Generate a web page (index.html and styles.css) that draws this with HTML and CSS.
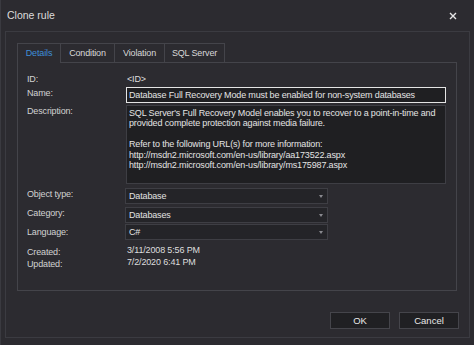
FILE: index.html
```html
<!DOCTYPE html>
<html>
<head>
<meta charset="utf-8">
<link rel="stylesheet" href="styles.css">
</head>
<body>
<div class="dialog">
  <div class="titlebar">
    <span class="title">Clone rule</span>
    <svg class="close" width="8" height="8" viewBox="0 0 8 8"><path d="M1 1L7 7M7 1L1 7" stroke="#e6e6e6" stroke-width="1.4"/></svg>
  </div>
  <div class="outer">
    <div class="tabs">
      <div class="tab active">Details</div>
      <div class="tab">Condition</div>
      <div class="tab">Violation</div>
      <div class="tab">SQL Server</div>
      <div class="tabfill"></div>
    </div>
    <div class="panel">
      <div class="row r-id"><div class="label">ID:</div><div class="value">&lt;ID&gt;</div></div>
      <div class="row r-name"><div class="label">Name:</div><div class="input focus">Database Full Recovery Mode must be enabled for non-system databases</div></div>
      <div class="row r-desc"><div class="label">Description:</div><div class="input area">SQL Server's Full Recovery Model enables you to recover to a point-in-time and
provided complete protection against media failure.

Refer to the following URL(s) for more information:
http://msdn2.microsoft.com/en-us/library/aa173522.aspx
http://msdn2.microsoft.com/en-us/library/ms175987.aspx</div></div>
      <div class="row r-obj"><div class="label">Object type:</div><div class="select"><span>Database</span><i class="arrow"></i></div></div>
      <div class="row r-cat"><div class="label">Category:</div><div class="select"><span>Databases</span><i class="arrow"></i></div></div>
      <div class="row r-lang"><div class="label lang">Language:</div><div class="select"><span>C#</span><i class="arrow"></i></div></div>
      <div class="row r-created"><div class="label">Created:</div><div class="value">3/11/2008 5:56 PM</div></div>
      <div class="row r-updated"><div class="label">Updated:</div><div class="value">7/2/2020 6:41 PM</div></div>
    </div>
    <div class="buttons">
      <div class="btn">OK</div>
      <div class="btn">Cancel</div>
    </div>
  </div>
</div>
</body>
</html>
```
FILE: styles.css
```css
html, body {
  margin: 0;
  padding: 0;
  background: #2c2b30;
}
body {
  width: 474px;
  height: 345px;
  overflow: hidden;
  font-family: "Liberation Sans", Arial, sans-serif;
  font-size: 9px;
  letter-spacing: -0.15px;
  color: #d2d2d2;
}
.dialog {
  width: 474px;
  height: 345px;
  box-sizing: border-box;
  border-left: 1px solid #3a3a40;
}
.titlebar {
  height: 31px;
  display: flex;
  align-items: center;
  justify-content: space-between;
  padding: 0 17px 0 6px;
  box-sizing: border-box;
}
.title {
  font-size: 10.5px;
  letter-spacing: 0;
  color: #dcdcdc;
  margin-top: -1px;
}
.close {
  display: block;
}
.outer {
  margin: 0 4px 0 4px;
  height: 307px;
  box-sizing: border-box;
  border: 1px solid #3b3b41;
  padding: 11px 12px 0 11px;
  display: flex;
  flex-direction: column;
}
.tabs {
  display: flex;
  height: 20px;
}
.tab {
  box-sizing: border-box;
  height: 20px;
  line-height: 19px;
  border-top: 1px solid #44444a;
  border-right: 1px solid #44444a;
  border-bottom: 1px solid #44444a;
  text-align: center;
  color: #d8d8d8;
}
.tab:nth-child(1) { width: 44px; }
.tab:nth-child(2) { width: 54px; }
.tab:nth-child(3) { width: 50px; }
.tab:nth-child(4) { width: 60px; }
.tab.active {
  border-left: 1px solid #44444a;
  border-bottom: none;
  color: #3f8ed8;
}
.tabfill {
  flex: 1;
  border-bottom: 1px solid #44444a;
}
.panel {
  height: 228px;
  box-sizing: border-box;
  border: 1px solid #44444a;
  border-top: none;
  padding: 9px 9px 0 9px;
}
.row {
  display: flex;
  align-items: flex-start;
}
.label {
  width: 99px;
  flex: none;
  line-height: 12px;
  color: #d2d2d2;
}
.value {
  color: #dedede;
}
.r-id { height: 14px; }
.r-id .label, .r-id .value { line-height: 14px; }
.r-id .value { padding-left: 1px; }
.r-name { margin-top: 1px; }
.r-desc { margin-top: 2px; }
.r-obj { margin-top: 4px; }
.r-cat { margin-top: 3px; }
.r-lang { margin-top: 1px; }
.r-created { margin-top: 6px; }
.r-created .label, .r-created .value,
.r-updated .label, .r-updated .value { line-height: 12px; }
.r-created .value, .r-updated .value { padding-left: 1px; margin-top: -2px; }
.label.lang { line-height: 16px; }
.input {
  box-sizing: border-box;
  width: 320px;
  height: 16px;
  line-height: 14px;
  border: 1px solid #3e3e44;
  background: #1f1f22;
  color: #e4e4e4;
  padding: 0 2px;
  white-space: nowrap;
  overflow: hidden;
}
.input.focus {
  border-color: #e4e4e4;
}
.input.area {
  height: 79px;
  white-space: pre-line;
  line-height: 10.4px;
  padding-top: 2px;
}
.select {
  box-sizing: border-box;
  width: 203px;
  height: 16px;
  margin-left: -1px;
  border: 1px solid #3e3e44;
  background: #242428;
  color: #e2e2e2;
  display: flex;
  align-items: center;
  justify-content: space-between;
  padding: 0 4px 0 3px;
}
.arrow {
  width: 0;
  height: 0;
  border-left: 2.5px solid transparent;
  border-right: 2.5px solid transparent;
  border-top: 3px solid #8a8a90;
}
.buttons {
  display: flex;
  justify-content: flex-end;
  gap: 9px;
  margin-top: 21px;
  margin-right: -2px;
}
.btn {
  box-sizing: border-box;
  width: 60px;
  height: 17px;
  line-height: 15px;
  text-align: center;
  border: 1px solid #45454b;
  background: #202023;
  color: #e8e8e8;
  font-size: 9.5px;
  letter-spacing: 0;
}
```
